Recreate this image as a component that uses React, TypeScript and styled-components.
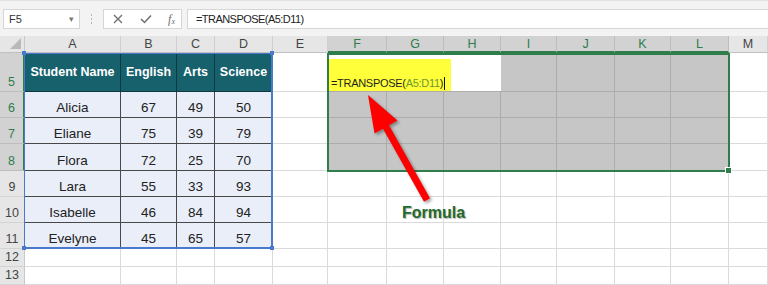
import styled, {createGlobalStyle, css} from 'styled-components'

const GREEN = '#2f7d4b'
const BLUE = '#4a78cc'

const COLS = '25px 96px 56px 38px 58px 55px 59px 57px 57px 56px 58px 56px 58px 1fr'
const ROWS = '17px 39px 26px 26px 27px 26px 26px 26px 18px 18px'

const LETTERS = ['A', 'B', 'C', 'D', 'E', 'F', 'G', 'H', 'I', 'J', 'K', 'L', 'M']
const HEADERS = ['Student Name', 'English', 'Arts', 'Science']
const STUDENTS: [string, number, number, number][] = [
  ['Alicia', 67, 49, 50],
  ['Eliane', 75, 39, 79],
  ['Flora', 72, 25, 70],
  ['Lara', 55, 33, 93],
  ['Isabelle', 46, 84, 94],
  ['Evelyne', 45, 65, 57],
]

type Tone = 'plain' | 'grey' | 'head' | 'body'

const GlobalStyle = createGlobalStyle`
  html, body {
    margin: 0;
    padding: 0;
    background: #fff;
  }
  body {
    font-family: "Liberation Sans", Arial, sans-serif;
  }
`

function App() {
  return (
    <>
      <GlobalStyle />
      <Window>
        <FormulaBar />
        <SheetArea>
          <SheetGrid>
            <Corner>
              <Triangle />
            </Corner>
            {LETTERS.map((l, i) => (
              <ColHeader key={l} $selected={i >= 5 && i <= 11}>
                {l}
              </ColHeader>
            ))}
            {[5, 6, 7, 8, 9, 10, 11, 12, 13].map(r => (
              <SheetRow key={r} row={r} />
            ))}
          </SheetGrid>
          <OverlayGrid>
            <RangeFrame>
              <RangeHandle $x="left" $y="top" />
              <RangeHandle $x="right" $y="top" />
              <RangeHandle $x="left" $y="bottom" />
              <RangeHandle $x="right" $y="bottom" />
            </RangeFrame>
            <SelectionFrame>
              <FillHandle />
            </SelectionFrame>
            <Annotation>
              <svg width="768" height="249" viewBox="0 0 768 249">
                <polygon
                  points="368,59 374.5,97.5 383,92.8 424,165.8 430,162.3 389,89.3 397.5,84.5"
                  fill="#ff0000"
                />
              </svg>
              <Label>Formula</Label>
            </Annotation>
          </OverlayGrid>
        </SheetArea>
      </Window>
    </>
  )
}

function FormulaBar() {
  return (
    <Toolbar>
      <NameBox>
        <span>F5</span>
        <DropCaret>▾</DropCaret>
      </NameBox>
      <Grip>
        <i />
        <i />
        <i />
      </Grip>
      <FxBox>
        <svg width="10" height="10" viewBox="0 0 10 10">
          <path d="M1 1 L9 9 M9 1 L1 9" stroke="#6e6e6e" strokeWidth="1.3" />
        </svg>
        <svg width="12" height="10" viewBox="0 0 12 10">
          <path d="M1 5 L4.5 8.5 L11 1.5" stroke="#6e6e6e" strokeWidth="1.5" fill="none" />
        </svg>
        <FxGlyph>
          f<sub>x</sub>
        </FxGlyph>
      </FxBox>
      <FormulaInput>=TRANSPOSE(A5:D11)</FormulaInput>
    </Toolbar>
  )
}

function SheetRow({row}: {row: number}) {
  const cells: React.ReactNode[] = []
  const student = row >= 6 && row <= 11 ? STUDENTS[row - 6] : null
  const inSelection = row >= 5 && row <= 8

  for (let c = 0; c < LETTERS.length; c++) {
    const key = `${LETTERS[c]}${row}`
    if (row === 5 && c < 4) {
      cells.push(
        <Cell key={key} $tone="head">
          {HEADERS[c]}
        </Cell>,
      )
    } else if (student && c < 4) {
      cells.push(
        <Cell key={key} $tone="body">
          {student[c]}
        </Cell>,
      )
    } else if (row === 5 && c === 5) {
      // F5 holds the formula being typed, spilling over G5 and H5
      cells.push(
        <OverflowCell key={key}>
          <Highlight>
            =TRANSPOSE(<Ref>A5:D11</Ref>)<TextCaret />
          </Highlight>
        </OverflowCell>,
      )
      c += 2
    } else {
      const grey = inSelection && c >= 5 && c <= 11
      cells.push(<Cell key={key} $tone={grey ? 'grey' : 'plain'} />)
    }
  }

  return (
    <>
      <RowHeader $selected={inSelection}>{row}</RowHeader>
      {cells}
    </>
  )
}

const Window = styled.div`
  width: 768px;
  height: 285px;
  overflow: hidden;
  background: #fff;
  display: flex;
  flex-direction: column;
`

const Toolbar = styled.div`
  height: 36px;
  box-sizing: border-box;
  background: #f3f3f3;
  border-top: 1px solid #e2e2e2;
  display: flex;
  align-items: flex-start;
  padding: 8px 0 0 3px;
`

const boxBase = css`
  height: 20px;
  box-sizing: border-box;
  background: #fff;
  border: 1px solid #d6d6d6;
  display: flex;
  align-items: center;
`

const NameBox = styled.div`
  ${boxBase};
  width: 77px;
  padding: 0 5px;
  justify-content: space-between;
  font-size: 11px;
  color: #333;
`

const DropCaret = styled.span`
  font-size: 9px;
  color: #777;
`

const Grip = styled.div`
  width: 23px;
  height: 20px;
  display: flex;
  flex-direction: column;
  align-items: center;
  justify-content: center;
  gap: 2px;

  i {
    width: 1px;
    height: 2px;
    background: #b5b5b5;
  }
`

const FxBox = styled.div`
  ${boxBase};
  width: 79px;
  padding: 0 6px 0 9px;
  justify-content: space-between;
`

const FxGlyph = styled.span`
  font-family: "Liberation Serif", serif;
  font-style: italic;
  font-size: 12px;
  color: #6e6e6e;
  line-height: 1;

  sub {
    font-size: 8px;
    vertical-align: -1px;
  }
`

const FormulaInput = styled.div`
  ${boxBase};
  flex: 1;
  margin-left: 5px;
  border-right: none;
  padding-left: 8px;
  font-size: 11px;
  letter-spacing: -0.55px;
  color: #222;
`

const SheetArea = styled.div`
  display: grid;
  flex: 1;

  > * {
    grid-area: 1 / 1;
  }
`

const sheetTemplate = css`
  display: grid;
  grid-template-columns: ${COLS};
  grid-template-rows: ${ROWS};
`

const SheetGrid = styled.div`
  ${sheetTemplate};
`

const OverlayGrid = styled.div`
  ${sheetTemplate};
  pointer-events: none;
`

const headerBase = css`
  box-sizing: border-box;
  display: flex;
  font-size: 12px;
  color: #444;
`

const Corner = styled.div`
  ${headerBase};
  background: #e6e6e6;
  border-right: 1px solid #c8c8c8;
  border-bottom: 1px solid #c0c0c0;
  align-items: flex-end;
  justify-content: flex-end;
  padding: 0 3px 3px 0;
`

const Triangle = styled.div`
  width: 0;
  height: 0;
  border-left: 11px solid transparent;
  border-bottom: 11px solid #b9b9b9;
`

const ColHeader = styled.div<{$selected?: boolean}>`
  ${headerBase};
  align-items: center;
  justify-content: center;
  font-size: 12.5px;
  background: ${p => (p.$selected ? '#d2d2d2' : '#e6e6e6')};
  color: ${p => (p.$selected ? GREEN : '#444')};
  border-right: 1px solid ${p => (p.$selected ? '#bdbdbd' : '#cfcfcf')};
  border-bottom: ${p => (p.$selected ? `2px solid ${GREEN}` : '1px solid #c0c0c0')};
`

const RowHeader = styled.div<{$selected?: boolean}>`
  ${headerBase};
  align-items: flex-end;
  justify-content: center;
  padding-bottom: 2px;
  font-size: 12.5px;
  background: ${p => (p.$selected ? '#d2d2d2' : '#e6e6e6')};
  color: ${p => (p.$selected ? GREEN : '#444')};
  border-right: ${p => (p.$selected ? `2px solid ${GREEN}` : '1px solid #c8c8c8')};
  border-bottom: 1px solid ${p => (p.$selected ? '#bdbdbd' : '#d3d3d3')};
`

const tones = {
  plain: css`
    background: #fff;
    border-right: 1px solid #dadada;
    border-bottom: 1px solid #dadada;
  `,
  grey: css`
    background: #c6c6c6;
    border-right: 1px solid #acacac;
    border-bottom: 1px solid #acacac;
  `,
  head: css`
    background: #17616d;
    color: #fff;
    font-weight: bold;
    font-size: 12.5px;
    align-items: center;
    border-right: 1px solid #0d3a42;
    border-bottom: 1px solid #0d3a42;
  `,
  body: css`
    background: #e9eef8;
    color: #222;
    font-size: 13.5px;
    align-items: flex-end;
    padding-bottom: 2px;
    border-right: 1px solid #484848;
    border-bottom: 1px solid #484848;
  `,
}

const Cell = styled.div<{$tone: Tone}>`
  box-sizing: border-box;
  display: flex;
  justify-content: center;
  white-space: nowrap;
  overflow: hidden;
  ${p => tones[p.$tone]};
`

const OverflowCell = styled.div`
  grid-column: span 3;
  box-sizing: border-box;
  background: #fff;
  border-bottom: 1px solid #acacac;
  display: flex;
  align-items: flex-end;
  padding-left: 1px;
`

const Highlight = styled.div`
  height: 32px;
  width: 122px;
  box-sizing: border-box;
  background: #ffff3a;
  display: flex;
  align-items: flex-end;
  padding: 0 0 2px 2px;
  font-size: 11px;
  letter-spacing: -0.3px;
  color: #1f1f1f;
  white-space: nowrap;
`

const Ref = styled.span`
  color: #6f9a2c;
`

const TextCaret = styled.span`
  display: inline-block;
  width: 1px;
  height: 13px;
  margin-left: 1px;
  margin-bottom: -1px;
  background: #111;
`

const RangeFrame = styled.div`
  grid-column: 2 / 6;
  grid-row: 2 / 9;
  position: relative;
  box-sizing: border-box;
  margin-left: -1px;
  border-top: 1px solid ${BLUE};
  border-left: 1px solid ${BLUE};
  border-right: 2px solid ${BLUE};
  border-bottom: 2px solid ${BLUE};
`

const RangeHandle = styled.span<{$x: 'left' | 'right'; $y: 'top' | 'bottom'}>`
  position: absolute;
  width: 4px;
  height: 4px;
  background: ${BLUE};
  ${p => p.$x}: -3px;
  ${p => p.$y}: -3px;
`

const SelectionFrame = styled.div`
  grid-column: 7 / 14;
  grid-row: 2 / 6;
  position: relative;
  box-sizing: border-box;
  margin: 0 -1px -1px -1px;
  border: 2px solid ${GREEN};
`

const FillHandle = styled.span`
  position: absolute;
  right: -4px;
  bottom: -4px;
  width: 5px;
  height: 5px;
  background: ${GREEN};
  border: 1px solid #fff;
`

const Annotation = styled.div`
  grid-column: 1 / -1;
  grid-row: 1 / -1;
  position: relative;

  svg {
    display: block;
    filter: drop-shadow(2px 2px 1.5px rgba(0, 0, 0, 0.35));
  }
`

const Label = styled.span`
  position: absolute;
  left: 402px;
  top: 168px;
  font-size: 16px;
  font-weight: bold;
  color: #1f6b2c;
  text-shadow: 1px 1px 1px rgba(0, 0, 0, 0.3);
`

export default App
